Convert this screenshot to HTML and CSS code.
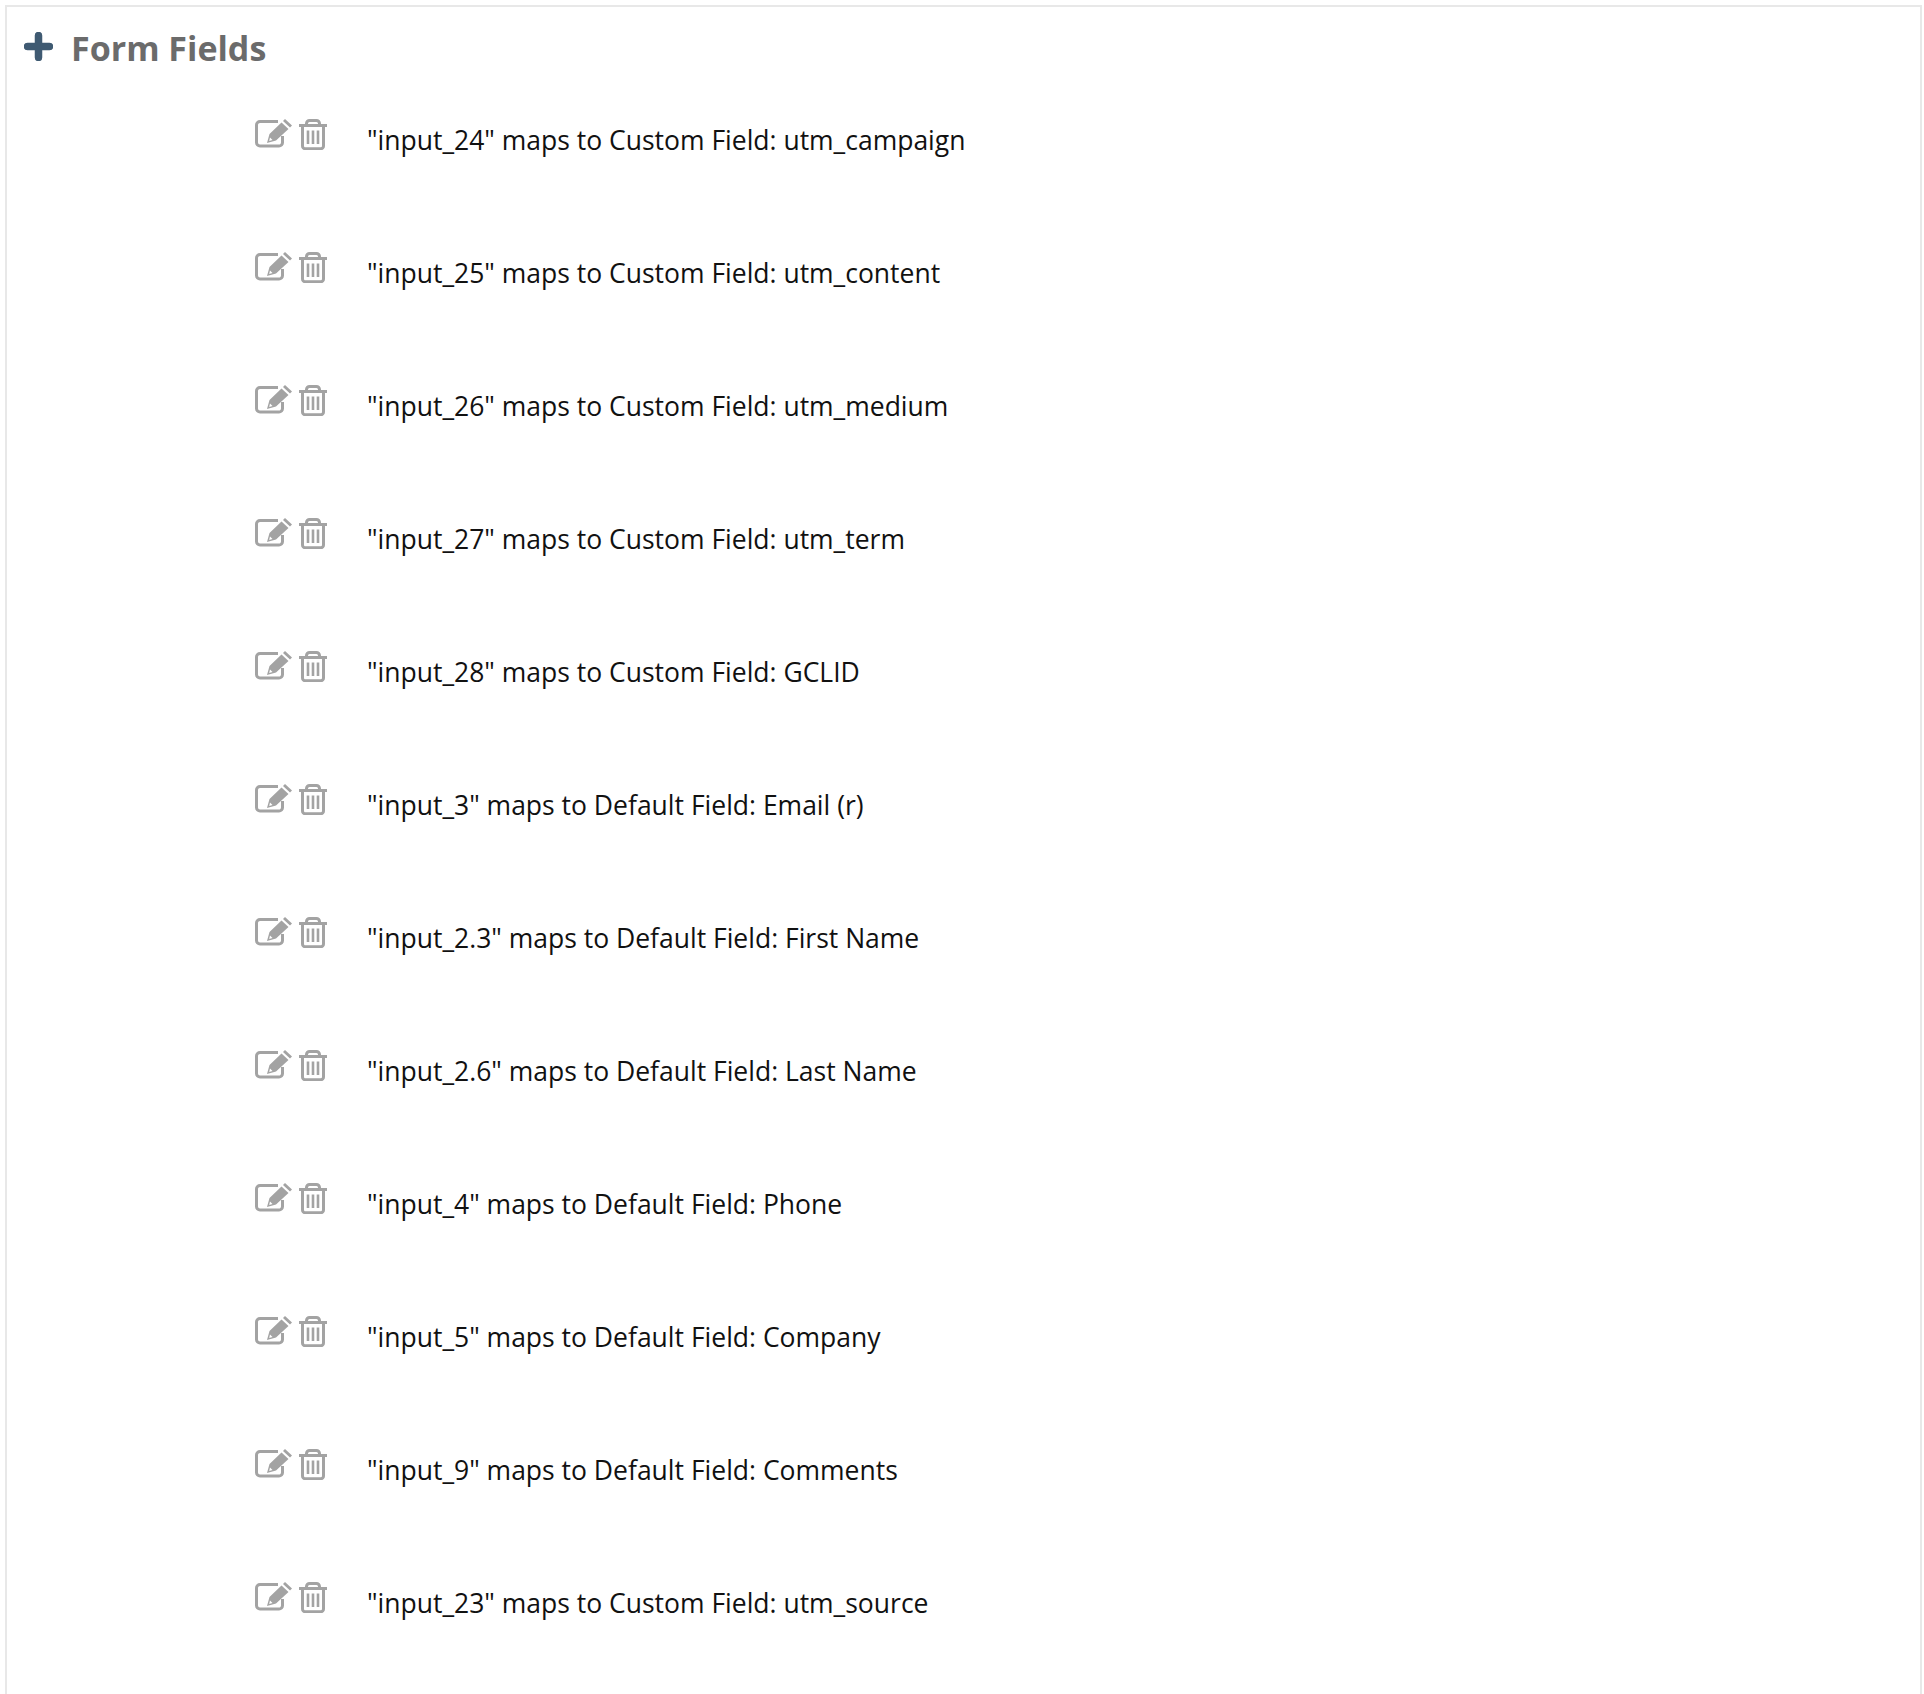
FILE: index.html
```html
<!DOCTYPE html>
<html lang="en">

<head>
    <meta charset="UTF-8" />
    <meta name="viewport" content="width=device-width, initial-scale=1.0" />
    <title>Form Fields</title>
    <link rel="stylesheet" href="styles.css">
</head>

<body>
    <svg class="icon-defs" width="0" height="0">
        <symbol id="icon-edit" viewBox="0 0 37 29">
            <path d="M27.500 17v6.500a3.500 3.500 0 0 1-3.500 3.500H5a3.500 3.500 0 0 1-3.500-3.500V6A3.500 3.500 0 0 1 5 2.500h18" fill="none" stroke="currentColor" stroke-width="3" />
            <path d="M12 24l2.500-9L26.500 3.500l7 6.500L21 21.500zM28 2l2-2 7 6.500-2 2z" fill="currentColor" />
            <path d="M15 18.500l2.500 2.500-3.300 1z" fill="#fff" />
        </symbol>
        <symbol id="icon-trash" viewBox="0 0 28 31">
            <path d="M0 6.500h28M7.500 6.500V4.500A3 3 0 0 1 10.500 1.500h7a3 3 0 0 1 3 3v2M3.500 6.500v20.500a2.800 2.800 0 0 0 2.800 2.800h15.400a2.800 2.800 0 0 0 2.800-2.800V6.500" fill="none" stroke="currentColor" stroke-width="3" />
            <path d="M9 11.500v13.500M14 11.500v13.500M19 11.500v13.500" fill="none" stroke="currentColor" stroke-width="2.600" />
        </symbol>
    </svg>

    <div class="panel">
        <h2 class="panel-title">
            <svg class="plus-icon" viewBox="0 0 29 29">
                <path d="M14.500 3.500v22M3.500 14.500h22" fill="none" stroke="currentColor" stroke-width="7.500" stroke-linecap="round" />
            </svg>
            <span class="title-text">Form Fields</span>
        </h2>

        <ul class="field-list">
            <li class="field-row">
                <span class="row-actions">
                    <svg class="edit-icon"><use href="#icon-edit"></use></svg>
                    <svg class="trash-icon"><use href="#icon-trash"></use></svg>
                </span>
                <span class="field-text">"input_24" maps to Custom Field: utm_campaign</span>
            </li>
            <li class="field-row">
                <span class="row-actions">
                    <svg class="edit-icon"><use href="#icon-edit"></use></svg>
                    <svg class="trash-icon"><use href="#icon-trash"></use></svg>
                </span>
                <span class="field-text">"input_25" maps to Custom Field: utm_content</span>
            </li>
            <li class="field-row">
                <span class="row-actions">
                    <svg class="edit-icon"><use href="#icon-edit"></use></svg>
                    <svg class="trash-icon"><use href="#icon-trash"></use></svg>
                </span>
                <span class="field-text">"input_26" maps to Custom Field: utm_medium</span>
            </li>
            <li class="field-row">
                <span class="row-actions">
                    <svg class="edit-icon"><use href="#icon-edit"></use></svg>
                    <svg class="trash-icon"><use href="#icon-trash"></use></svg>
                </span>
                <span class="field-text">"input_27" maps to Custom Field: utm_term</span>
            </li>
            <li class="field-row">
                <span class="row-actions">
                    <svg class="edit-icon"><use href="#icon-edit"></use></svg>
                    <svg class="trash-icon"><use href="#icon-trash"></use></svg>
                </span>
                <span class="field-text">"input_28" maps to Custom Field: GCLID</span>
            </li>
            <li class="field-row">
                <span class="row-actions">
                    <svg class="edit-icon"><use href="#icon-edit"></use></svg>
                    <svg class="trash-icon"><use href="#icon-trash"></use></svg>
                </span>
                <span class="field-text">"input_3" maps to Default Field: Email (r)</span>
            </li>
            <li class="field-row">
                <span class="row-actions">
                    <svg class="edit-icon"><use href="#icon-edit"></use></svg>
                    <svg class="trash-icon"><use href="#icon-trash"></use></svg>
                </span>
                <span class="field-text">"input_2.3" maps to Default Field: First Name</span>
            </li>
            <li class="field-row">
                <span class="row-actions">
                    <svg class="edit-icon"><use href="#icon-edit"></use></svg>
                    <svg class="trash-icon"><use href="#icon-trash"></use></svg>
                </span>
                <span class="field-text">"input_2.6" maps to Default Field: Last Name</span>
            </li>
            <li class="field-row">
                <span class="row-actions">
                    <svg class="edit-icon"><use href="#icon-edit"></use></svg>
                    <svg class="trash-icon"><use href="#icon-trash"></use></svg>
                </span>
                <span class="field-text">"input_4" maps to Default Field: Phone</span>
            </li>
            <li class="field-row">
                <span class="row-actions">
                    <svg class="edit-icon"><use href="#icon-edit"></use></svg>
                    <svg class="trash-icon"><use href="#icon-trash"></use></svg>
                </span>
                <span class="field-text">"input_5" maps to Default Field: Company</span>
            </li>
            <li class="field-row">
                <span class="row-actions">
                    <svg class="edit-icon"><use href="#icon-edit"></use></svg>
                    <svg class="trash-icon"><use href="#icon-trash"></use></svg>
                </span>
                <span class="field-text">"input_9" maps to Default Field: Comments</span>
            </li>
            <li class="field-row">
                <span class="row-actions">
                    <svg class="edit-icon"><use href="#icon-edit"></use></svg>
                    <svg class="trash-icon"><use href="#icon-trash"></use></svg>
                </span>
                <span class="field-text">"input_23" maps to Custom Field: utm_source</span>
            </li>
        </ul>
    </div>
</body>

</html>
```

FILE: styles.css
```css
* {
    box-sizing: border-box;
    margin: 0;
    padding: 0;
}

body {
    font-family: "Open Sans", sans-serif;
    background-color: #fff;
    height: 1694px;
    overflow: hidden;
    padding: 5px 2px 0 5px;
}

.icon-defs {
    display: block;
    height: 0;
}

.panel {
    height: 100%;
    border: solid #e8e8e8;
    border-width: 2px 2px 0 2px;
    padding: 25px 0 0 17px;
}

.panel-title {
    display: flex;
    align-items: center;
    gap: 18px;
    height: 29px;
    font-size: 34px;
    font-weight: 700;
    color: #6b6b6b;
}

.title-text {
    padding-top: 3px;
}

.plus-icon {
    width: 29px;
    height: 29px;
    color: #3f5a72;
}

.field-list {
    list-style: none;
    padding: 58px 0 0 231px;
}

.field-row {
    display: flex;
    align-items: flex-start;
    height: 133px;
}

.row-actions {
    display: flex;
    gap: 7px;
    width: 112px;
    color: #a3a3a3;
}

.edit-icon {
    width: 37px;
    height: 29px;
}

.trash-icon {
    width: 28px;
    height: 31px;
}

.field-text {
    font-size: 26.5px;
    line-height: 36px;
    margin-top: 3px;
    color: #111;
}
```
